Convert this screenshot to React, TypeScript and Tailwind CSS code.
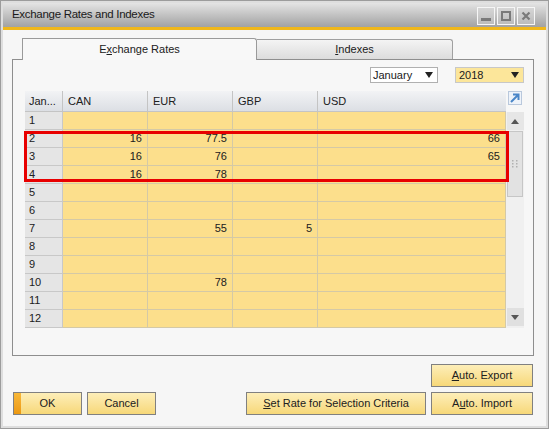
import React from 'react'

const rows: { n: number; can?: string; eur?: string; gbp?: string; usd?: string }[] = [
  { n: 1 },
  { n: 2, can: '16', eur: '77.5', usd: '66' },
  { n: 3, can: '16', eur: '76', usd: '65' },
  { n: 4, can: '16', eur: '78' },
  { n: 5 },
  { n: 6 },
  { n: 7, eur: '55', gbp: '5' },
  { n: 8 },
  { n: 9 },
  { n: 10, eur: '78' },
  { n: 11 },
  { n: 12 },
]

function Caret() {
  return (
    <svg width="8" height="6" viewBox="0 0 8 6">
      <path d="M0 0 H8 L4 6 Z" fill="#222" />
    </svg>
  )
}

function TitleButton({ kind }: { kind: 'min' | 'max' | 'close' }) {
  return (
    <div className="w-[18px] h-[18px] border border-[#f6f6f6] bg-linear-to-b from-[#d6d6d6] to-[#bcbcbc] flex items-center justify-center">
      <svg width="12" height="12" viewBox="0 0 12 12">
        {kind === 'min' && <rect x="1" y="8" width="10" height="3" fill="#7a7a7a" />}
        {kind === 'max' && <rect x="2" y="2" width="8" height="8" fill="none" stroke="#7a7a7a" strokeWidth="2" />}
        {kind === 'close' && <path d="M2.5 2.5 L9.5 9.5 M9.5 2.5 L2.5 9.5" stroke="#7a7a7a" strokeWidth="2.2" />}
      </svg>
    </div>
  )
}

function Btn({ children, w, ok }: { children: React.ReactNode; w: string; ok?: boolean }) {
  return (
    <div className={`${w} h-[23px] border border-[#808080] bg-linear-to-b from-[#fdeeb8] to-[#f7d878] flex items-center justify-center relative text-[11px] text-[#202020]`}>
      {ok && <div className="absolute left-0 top-0 bottom-0 w-[7px] bg-linear-to-b from-[#f8b838] to-[#ec9810]" />}
      <span>{children}</span>
    </div>
  )
}

export default function App() {
  const cell = 'border-r border-b border-[#d4c9a6] h-[18px] bg-[#fcdf8c] text-right pr-[5px] leading-[17px]'
  return (
    <div className="w-[549px] h-[429px] border border-[#9c9c9c] bg-[#dedede] p-[2px] text-[11px] text-[#202020]" style={{ fontFamily: '"Liberation Sans", Arial, sans-serif' }}>
      <div className="w-full h-full flex flex-col bg-[#f6f6f6]">
        {/* title bar */}
        <div className="h-[24px] bg-linear-to-b from-[#e4e4e4] to-[#a2a2a2] flex items-center pl-[9px] pr-[11px]">
          <span className="text-[11.5px] tracking-[-0.3px] text-[#1a1a1a] flex-1">Exchange Rates and Indexes</span>
          <div className="flex gap-[2px] mt-[2px]">
            <TitleButton kind="min" />
            <TitleButton kind="max" />
            <TitleButton kind="close" />
          </div>
        </div>
        <div className="h-[3px] bg-[#f0b71a]" />

        {/* tabs */}
        <div className="mt-[8px] flex items-end pl-[19px] h-[22px] relative z-10">
          <div className="w-[235px] h-[22px] border border-b-0 border-[#9a9a9a] rounded-tr-[3px] bg-[#f8f8f8] flex items-center justify-center text-[11px]">
            E<span className="underline">x</span>change Rates
          </div>
          <div className="w-[196px] h-[20px] mb-[1px] border border-l-0 border-b-0 border-[#a0a0a0] rounded-tr-[3px] bg-linear-to-b from-[#f4f4f4] to-[#dcdcdc] flex items-center justify-center">
            <span className="underline">I</span>ndexes
          </div>
        </div>

        {/* panel */}
        <div className="ml-[9px] -mt-[1px] w-[522px] h-[297px] border border-[#8e8e8e] bg-[#f7f7f7] flex flex-col">
          <div className="flex justify-end gap-[17px] mt-[7px] pr-[9px]">
            <div className="w-[68px] h-[16px] border border-[#b0b0b0] bg-white flex items-center pl-[2px] pr-[4px]">
              <span className="flex-1">January</span>
              <Caret />
            </div>
            <div className="w-[69px] h-[16px] border border-[#c8c8c8] bg-[#fce69a] flex items-center pl-[3px] pr-[4px]">
              <span className="flex-1">2018</span>
              <Caret />
            </div>
          </div>

          {/* grid */}
          <div className="ml-[12px] mt-[8px] w-[499px] relative">
            <div className="flex h-[21px]">
              <div className="w-[38px] border-r border-b border-[#c4c4c4] bg-linear-to-b from-[#f2f3f5] to-[#dcdfe4] pl-[4px] leading-[20px]">Jan...</div>
              {['CAN', 'EUR', 'GBP'].map((c) => (
                <div key={c} className="w-[85px] border-r border-b border-[#c4c4c4] bg-linear-to-b from-[#f2f3f5] to-[#dcdfe4] pl-[5px] leading-[20px]">{c}</div>
              ))}
              <div className="w-[188px] border-b border-[#c4c4c4] bg-linear-to-b from-[#f2f3f5] to-[#dcdfe4] pl-[5px] leading-[20px]">USD</div>
              <div className="w-[18px] flex items-start justify-center">
                <svg width="14" height="14" viewBox="0 0 14 14">
                  <rect x="0.5" y="0.5" width="13" height="13" fill="#eef3fa" stroke="#b9c8dc" />
                  <path d="M3 11 L10 4 M5 3.5 H10.5 V9" stroke="#4a86c8" strokeWidth="2" fill="none" />
                </svg>
              </div>
            </div>
            <div className="flex">
              <div className="flex flex-col">
                {rows.map((r) => (
                  <div key={r.n} className="flex">
                    <div className="w-[38px] h-[18px] border-r border-b border-[#c8c8c8] bg-[#e5e5e5] pl-[4px] leading-[17px]">{r.n}</div>
                    <div className={`w-[85px] ${cell}`}>{r.can}</div>
                    <div className={`w-[85px] ${cell}`}>{r.eur}</div>
                    <div className={`w-[85px] ${cell}`}>{r.gbp}</div>
                    <div className={`w-[188px] ${cell}`}>{r.usd}</div>
                  </div>
                ))}
              </div>
              {/* scrollbar */}
              <div className="w-[18px] h-[216px] bg-[#f0f0f0] flex flex-col items-center">
                <div className="w-[17px] h-[18px] bg-[#e6e6e6] flex items-center justify-center">
                  <svg width="8" height="5" viewBox="0 0 8 5"><path d="M0 5 H8 L4 0 Z" fill="#555" /></svg>
                </div>
                <div className="w-[16px] h-[66px] mt-[1px] border border-[#c6c6c6] bg-[#e2e2e2] flex items-center justify-center">
                  <svg width="6" height="8" viewBox="0 0 6 8">
                    {[0, 3, 6].map((y) => (
                      <g key={y}>
                        <rect x="0" y={y} width="1.5" height="1.5" fill="#b0b0b0" />
                        <rect x="4" y={y} width="1.5" height="1.5" fill="#b0b0b0" />
                      </g>
                    ))}
                  </svg>
                </div>
                <div className="flex-1" />
                <div className="w-[17px] h-[18px] mb-[2px] bg-[#e0e0e0] flex items-center justify-center">
                  <svg width="8" height="5" viewBox="0 0 8 5"><path d="M0 0 H8 L4 5 Z" fill="#555" /></svg>
                </div>
              </div>
            </div>
            {/* selection highlight */}
            <div className="absolute left-[-1px] top-[40px] w-[485px] h-[51px] border-[3px] border-[#e80000] pointer-events-none" />
          </div>
        </div>

        {/* buttons */}
        <div className="flex justify-end pr-[13px] mt-[8px]">
          <Btn w="w-[102px]"><span className="underline">A</span>uto. Export</Btn>
        </div>
        <div className="flex mt-[5px] pl-[10px] pr-[13px]">
          <Btn w="w-[69px]" ok>OK</Btn>
          <div className="w-[5px]" />
          <Btn w="w-[69px]">Cancel</Btn>
          <div className="flex-1" />
          <Btn w="w-[180px]"><span className="underline">S</span>et Rate for Selection Criteria</Btn>
          <div className="w-[5px]" />
          <Btn w="w-[102px]">A<span className="underline">u</span>to. Import</Btn>
        </div>
      </div>
    </div>
  )
}
